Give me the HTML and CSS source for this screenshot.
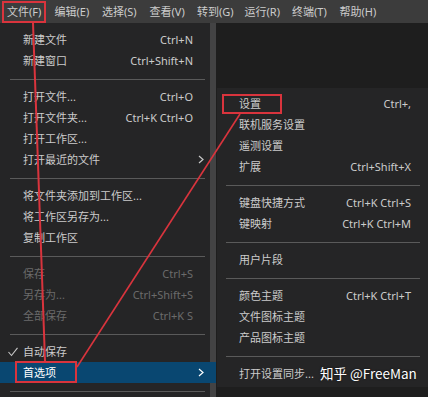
FILE: index.html
```html
<!DOCTYPE html>
<html>
<head>
    <meta charset="UTF-8">
    <meta name="viewport" content="width=device-width, initial-scale=1.0">
    <title>首选项</title>
    <link rel="stylesheet" href="styles.css">
</head>
<body>
    <div class="window">
        <div class="menubar">
            <span class="top-item">文件(F)</span>
            <span class="top-item">编辑(E)</span>
            <span class="top-item">选择(S)</span>
            <span class="top-item">查看(V)</span>
            <span class="top-item">转到(G)</span>
            <span class="top-item">运行(R)</span>
            <span class="top-item">终端(T)</span>
            <span class="top-item">帮助(H)</span>
        </div>
        <div class="workbench">
            <div class="menu file-menu">
                <div class="item"><span>新建文件</span><span class="key">Ctrl+N</span></div>
                <div class="item"><span>新建窗口</span><span class="key">Ctrl+Shift+N</span></div>
                <div class="sep"></div>
                <div class="item"><span>打开文件...</span><span class="key">Ctrl+O</span></div>
                <div class="item"><span>打开文件夹...</span><span class="key">Ctrl+K Ctrl+O</span></div>
                <div class="item"><span>打开工作区...</span></div>
                <div class="item"><span>打开最近的文件</span>
                    <svg class="arrow" width="6" height="9" viewBox="0 0 6 9"><polyline points="1,1 5,4.5 1,8" fill="none" stroke="#c8c8c8" stroke-width="1.2"/></svg>
                </div>
                <div class="sep"></div>
                <div class="item"><span>将文件夹添加到工作区...</span></div>
                <div class="item"><span>将工作区另存为...</span></div>
                <div class="item"><span>复制工作区</span></div>
                <div class="sep"></div>
                <div class="item disabled"><span>保存</span><span class="key">Ctrl+S</span></div>
                <div class="item disabled"><span>另存为...</span><span class="key">Ctrl+Shift+S</span></div>
                <div class="item disabled"><span>全部保存</span><span class="key">Ctrl+K S</span></div>
                <div class="sep"></div>
                <div class="item checked">
                    <svg class="check" width="15" height="10" viewBox="0 0 15 10"><polyline points="0.5,5 3.5,8.5 9.5,0.8" fill="none" stroke="#c8c8c8" stroke-width="1.1"/></svg>
                    <span>自动保存</span>
                </div>
                <div class="item active"><span>首选项</span>
                    <svg class="arrow" width="6" height="9" viewBox="0 0 6 9"><polyline points="1,1 5,4.5 1,8" fill="none" stroke="#ffffff" stroke-width="1.2"/></svg>
                </div>
                <div class="sep"></div>
            </div>
            <div class="side">
                <div class="editor-gap"></div>
                <div class="menu sub-menu">
                    <div class="item"><span>设置</span><span class="key">Ctrl+,</span></div>
                    <div class="item"><span>联机服务设置</span></div>
                    <div class="item"><span>遥测设置</span></div>
                    <div class="item"><span>扩展</span><span class="key">Ctrl+Shift+X</span></div>
                    <div class="sep"></div>
                    <div class="item"><span>键盘快捷方式</span><span class="key">Ctrl+K Ctrl+S</span></div>
                    <div class="item"><span>键映射</span><span class="key">Ctrl+K Ctrl+M</span></div>
                    <div class="sep"></div>
                    <div class="item"><span>用户片段</span></div>
                    <div class="sep"></div>
                    <div class="item"><span>颜色主题</span><span class="key">Ctrl+K Ctrl+T</span></div>
                    <div class="item"><span>文件图标主题</span></div>
                    <div class="item"><span>产品图标主题</span></div>
                    <div class="sep"></div>
                    <div class="item"><span>打开设置同步...</span></div>
                </div>
            </div>
        </div>

        <!-- red annotation marks drawn over the screenshot -->
        <svg class="marks" width="428" height="397" viewBox="0 0 428 397">
            <g fill="none" stroke="#d9343d">
                <rect x="3" y="2" width="42" height="20" stroke-width="2"/>
                <rect x="16" y="362" width="60" height="20" stroke-width="2"/>
                <rect x="223" y="95" width="58" height="18" stroke-width="2"/>
                <line x1="33" y1="23" x2="45" y2="361" stroke-width="2"/>
                <line x1="77" y1="367" x2="240" y2="114" stroke-width="1.6"/>
            </g>
        </svg>
        <div class="watermark">知乎 @FreeMan</div>
    </div>
</body>
</html>
```

FILE: styles.css
```css
body {
    margin: 0;
    padding: 0;
    background-color: #1e1e1e;
    font-family: "Noto Sans", "Noto Sans CJK SC", sans-serif;
    font-size: 11px;
    color: #cccccc;
}
.window {
    position: relative;
    width: 428px;
    height: 397px;
    overflow: hidden;
}
.menubar {
    display: flex;
    height: 23px;
    line-height: 23px;
    background-color: #3c3c3c;
}
.top-item {
    width: 47.5px;
    padding-left: 7px;
    box-sizing: border-box;
    white-space: nowrap;
    flex-shrink: 0;
}
.workbench {
    display: flex;
}
.menu {
    background-color: #252526;
}
.file-menu {
    width: 216px;
    flex-shrink: 0;
    padding: 6px 0 0;
    height: 374px;
    box-sizing: border-box;
    background: linear-gradient(to right, #252526 210px, #434344 210px);
}
.side {
    flex: 1;
}
.editor-gap {
    height: 65px;
    background-color: #1e1e1e;
}
.sub-menu {
    padding: 5px 0 3px;
    margin-left: 1px;
}
.item {
    display: flex;
    align-items: center;
    height: 21px;
    line-height: 21px;
    padding: 0 23px;
    white-space: nowrap;
}
.item .key {
    margin-left: auto;
}
.item .arrow {
    margin-left: auto;
    margin-right: -11px;
}
.item.checked {
    padding-left: 8px;
}
.item .check {
    width: 15px;
    flex-shrink: 0;
}
.item.disabled {
    color: #6b6b6b;
}
.item.active {
    background-color: #094771;
    color: #ffffff;
}
.sep {
    height: 15px;
    box-sizing: border-box;
    padding-top: 8px;
}
.sep::before {
    content: "";
    display: block;
    height: 1px;
    background-color: #5a5a5a;
}
.file-menu .sep {
    margin: 0 11px 0 10px;
}
.sub-menu .item {
    padding: 0 17px 0 22px;
}
.sub-menu .sep {
    margin: 0 8px 0 9px;
}
.marks {
    position: absolute;
    top: 0;
    left: 0;
    pointer-events: none;
}
.watermark {
    position: absolute;
    left: 320px;
    top: 363px;
    font-family: "Noto Sans CJK SC", sans-serif;
    font-size: 13.5px;
    line-height: 20px;
    color: #ffffff;
    text-shadow: 0 0 2px rgba(0, 0, 0, 0.6);
}
```
